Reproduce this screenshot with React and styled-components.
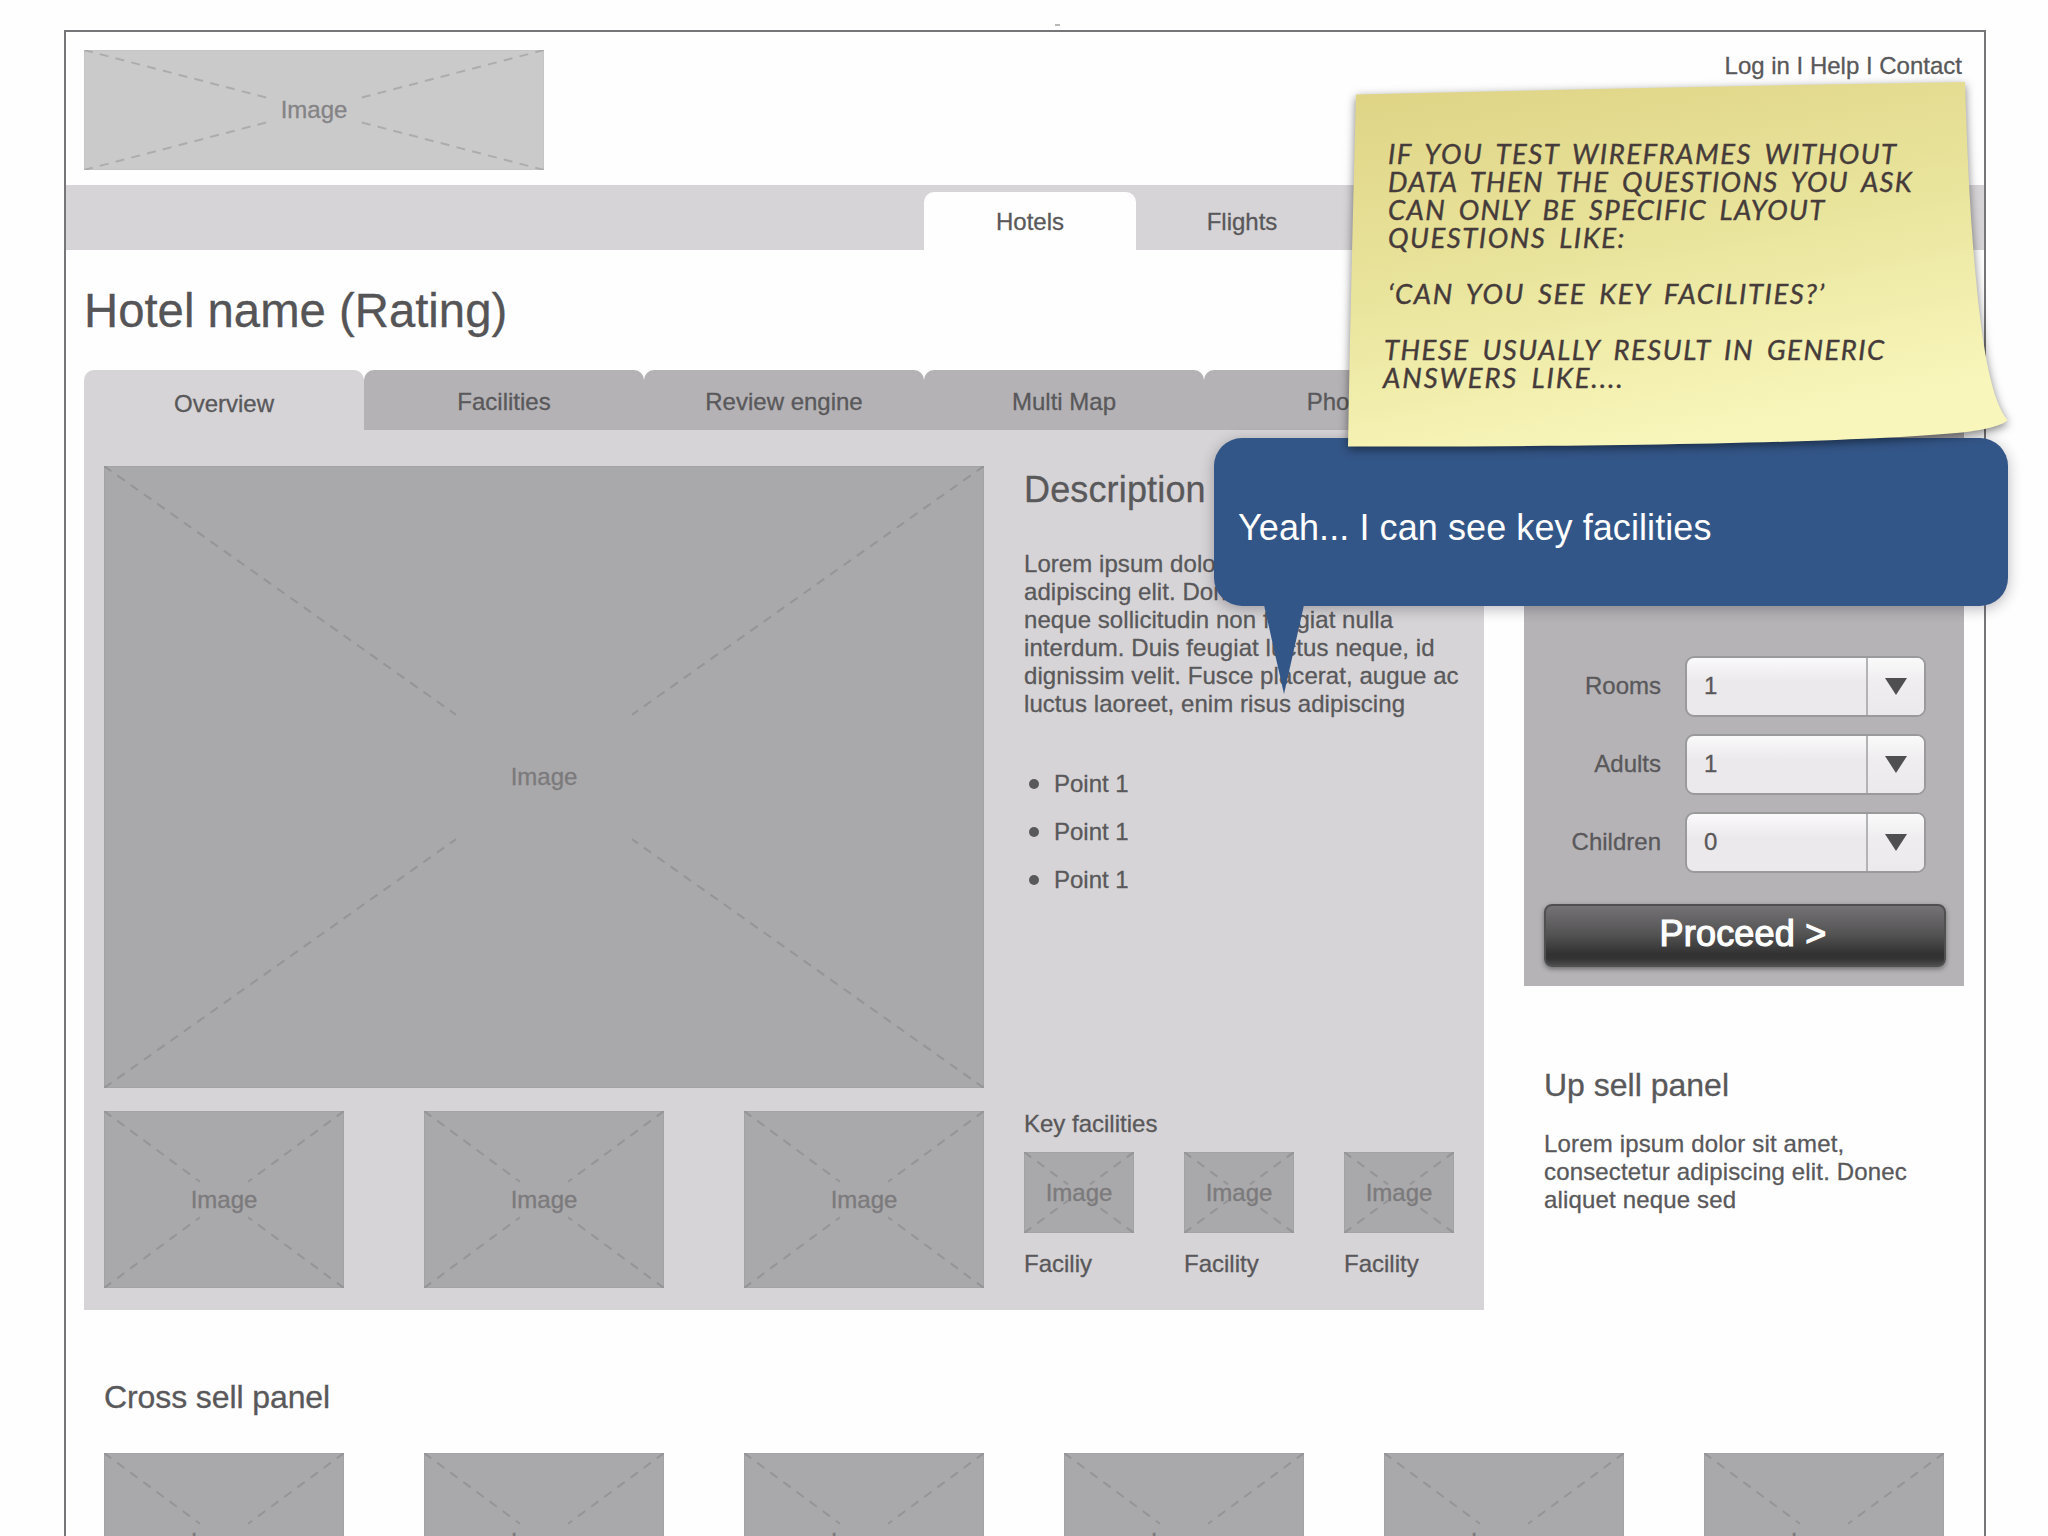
import React from "react";
import styled, { createGlobalStyle } from "styled-components";

const GlobalStyle = createGlobalStyle`
  *, *::before, *::after { box-sizing: border-box; }
  html, body { margin: 0; padding: 0; background: #fefefe; overflow: hidden; }
  h1, h2, h3, p, ul { margin: 0; padding: 0; font-weight: 400; }
  body {
    font-family: "Liberation Sans", Arial, sans-serif;
    font-size: 24px;
    line-height: 28px;
    color: #59585a;
    -webkit-text-stroke: 0.3px currentColor;
  }
`;

const Stage = styled.div`
  position: relative;
  width: 2048px;
  height: 1536px;
  overflow: hidden;
  padding: 30px 62px 0 64px;
`;

const TopMark = styled.div`
  position: absolute;
  left: 1055px;
  top: 24px;
  width: 5px;
  height: 2px;
  background: #b9b8b9;
`;

const Frame = styled.div`
  height: 1600px;
  border: 2px solid #767577;
`;

const Header = styled.header`
  display: flex;
  justify-content: space-between;
  align-items: flex-start;
  height: 153px;
  padding: 18px 22px 0 18px;
`;

const UtilityLinks = styled.nav`
  padding-top: 2px;
  white-space: pre;
`;

const PrimaryNav = styled.nav`
  display: flex;
  align-items: flex-end;
  height: 65px;
  padding-left: 858px;
  background: #d6d4d6;
`;

const PrimaryTab = styled.div`
  width: 212px;
  height: 58px;
  padding-top: 16px;
  text-align: center;
  border-radius: 10px 10px 0 0;
  background: ${(p) => (p.$active ? "#fefefe" : "transparent")};
`;

const PageTitle = styled.h1`
  margin: 33px 0 31px 18px;
  font-size: 47.3px;
  line-height: 56px;
  color: #555456;
`;

const Columns = styled.main`
  display: grid;
  grid-template-columns: 1400px 440px;
  column-gap: 40px;
  margin-left: 18px;
`;

const SectionTabs = styled.div`
  display: flex;
  height: 60px;
`;

const SectionTab = styled.div`
  width: 280px;
  padding-top: ${(p) => (p.$active ? 20 : 18)}px;
  text-align: center;
  border-radius: 10px 10px 0 0;
  background: ${(p) => (p.$active ? "#d6d4d6" : "#b4b2b5")};
`;

const SectionBody = styled.section`
  display: grid;
  grid-template-columns: 880px 430px;
  column-gap: 40px;
  height: 880px;
  padding: 36px 20px 0;
  background: #d6d4d6;
`;

const Gallery = styled.div`
  display: flex;
  flex-direction: column;
  gap: 23px;
`;

const ThumbRow = styled.div`
  display: flex;
  gap: 80px;
`;

const PlaceholderBox = styled.div`
  position: relative;
  display: flex;
  flex: none;
  align-items: center;
  justify-content: center;
  width: ${(p) => p.$w}px;
  height: ${(p) => p.$h}px;
  background: ${(p) => (p.$light ? "#cbcacb" : "#a9a8aa")};
  box-shadow: inset 0 0 0 1px ${(p) => (p.$light ? "#c6c5c6" : "#a3a2a4")};
  color: ${(p) => (p.$light ? "#848385" : "#7b7a7c")};
`;

const Cross = styled.svg`
  position: absolute;
  inset: 0;
  width: 100%;
  height: 100%;
`;

const PlaceholderLabel = styled.span`
  position: relative;
`;

function Placeholder({ w, h, light }) {
  const x1 = w * 0.4;
  const x2 = w * 0.6;
  const y1 = h * 0.4;
  const y2 = h * 0.6;
  return (
    <PlaceholderBox $w={w} $h={h} $light={light}>
      <Cross viewBox={`0 0 ${w} ${h}`}>
        <path
          d={`M0 0L${x1} ${y1}M${w} 0L${x2} ${y1}M0 ${h}L${x1} ${y2}M${w} ${h}L${x2} ${y2}`}
          fill="none"
          stroke={light ? "#adacad" : "#959496"}
          strokeWidth="2"
          strokeDasharray="9 7.3"
        />
      </Cross>
      <PlaceholderLabel>Image</PlaceholderLabel>
    </PlaceholderBox>
  );
}

const Details = styled.div`
  display: flex;
  flex-direction: column;
  padding-top: 3px;
  white-space: nowrap;
`;

const DetailsTitle = styled.h2`
  margin-bottom: 39px;
  font-size: 36px;
  line-height: 42px;
  letter-spacing: 0.15px;
`;

const DetailsText = styled.p`
  letter-spacing: 0.06px;
`;

const Points = styled.ul`
  display: flex;
  flex-direction: column;
  gap: 20px;
  height: 340px;
  margin-top: 52px;
  list-style: none;
`;

const Point = styled.li`
  display: flex;
  align-items: center;
  gap: 15px;
  padding-left: 5px;
  &::before {
    content: "";
    width: 10px;
    height: 10px;
    border-radius: 50%;
    background: #59585a;
  }
`;

const KeyTitle = styled.h3`
  font-size: 24px;
  line-height: 28px;
`;

const Facilities = styled.div`
  display: flex;
  gap: 50px;
  margin-top: 14px;
`;

const Facility = styled.div`
  display: flex;
  flex-direction: column;
  gap: 17px;
`;

const BookingPanel = styled.form`
  display: flex;
  flex-direction: column;
  justify-content: flex-end;
  gap: 17px;
  height: 616px;
  padding: 0 18px 19px 20px;
  background: #b5b3b6;
`;

const Field = styled.label`
  display: flex;
  align-items: center;
  justify-content: flex-end;
  gap: 24px;
  padding-right: 20px;
`;

const FieldName = styled.span`
  padding-bottom: 2px;
`;

const Select = styled.span`
  display: flex;
  width: 241px;
  height: 61px;
  border: 2px solid #9a999b;
  border-radius: 9px;
  background: linear-gradient(#fbfafb, #ebe9eb 42%, #ebe9eb);
`;

const SelectValue = styled.span`
  display: flex;
  align-items: center;
  width: 181px;
  padding-left: 17px;
  padding-bottom: 2px;
  border-right: 2px solid #b3b2b4;
`;

const SelectArrow = styled.span`
  display: flex;
  flex: 1;
  align-items: center;
  justify-content: center;
  border-radius: 0 7px 7px 0;
  background: linear-gradient(#fbfafb, #efedef 42%, #ebe9eb);
`;

function Dropdown({ label, value }) {
  return (
    <Field>
      <FieldName>{label}</FieldName>
      <Select>
        <SelectValue>{value}</SelectValue>
        <SelectArrow>
          <svg width="22" height="17" viewBox="0 0 22 17">
            <path d="M0 0H22L11 17Z" fill="#4f4e50" />
          </svg>
        </SelectArrow>
      </Select>
    </Field>
  );
}

const ProceedButton = styled.button`
  width: 402px;
  height: 63px;
  margin-top: 14px;
  padding: 0 4px 3px 0;
  border: 2px solid #505051;
  border-radius: 8px;
  background: linear-gradient(#747274, #545354 48%, #323132 82%, #353435 90%, #4c4b4c);
  box-shadow: 0 2px 5px rgba(0, 0, 0, 0.4);
  color: #fff;
  font: 400 36px/42px "Liberation Sans", Arial, sans-serif;
  letter-spacing: 0.2px;
  -webkit-text-stroke: 1.2px #fff;
`;

const UpSell = styled.section`
  padding: 80px 0 0 20px;
  white-space: nowrap;
`;

const PanelTitle = styled.h3`
  font-size: 32px;
  line-height: 38px;
  letter-spacing: ${(p) => p.$track || 0}px;
`;

const UpSellText = styled.p`
  margin-top: 26px;
  letter-spacing: 0.16px;
`;

const CrossSell = styled.section`
  padding: 68px 0 0 38px;
`;

const CrossSellRow = styled(ThumbRow)`
  margin-top: 37px;
`;

const Speech = styled.aside`
  position: absolute;
  left: 1214px;
  top: 438px;
  width: 794px;
  height: 168px;
  padding: 70px 0 0 24px;
  border-radius: 28px;
  background: #335688;
  box-shadow: 0 3px 14px rgba(40, 30, 50, 0.32);
  color: #fff;
  font-size: 36px;
  line-height: 40px;
  letter-spacing: 0.08px;
  -webkit-text-stroke: 0;
`;

const SpeechTail = styled.svg`
  position: absolute;
  left: 50px;
  top: 167px;
`;

const Note = styled.aside`
  position: absolute;
  left: 1340px;
  top: 74px;
  width: 680px;
  height: 384px;
  padding: 66px 0 0 48px;
`;

const NotePaper = styled.svg`
  position: absolute;
  inset: 0;
  overflow: visible;
  filter: drop-shadow(0 3px 5px rgba(0, 0, 0, 0.5));
`;

const NoteText = styled.div`
  position: relative;
  display: flex;
  flex-direction: column;
  gap: 28px;
  font-family: Lato, "Open Sans", sans-serif;
  font-size: 27.5px;
  font-style: italic;
  line-height: 28px;
  word-spacing: 5px;
  color: #453b3a;
  white-space: nowrap;
  -webkit-text-stroke: 0.4px #453b3a;
`;

const NoteLine = styled.div`
  letter-spacing: ${(p) => p.$track}px;
  margin-left: ${(p) => p.$shift || 0}px;
`;

const noteParagraphs = [
  [
    { text: "IF YOU TEST WIREFRAMES WITHOUT", track: 1.5 },
    { text: "DATA THEN THE QUESTIONS YOU ASK", track: 1.35 },
    { text: "CAN ONLY BE SPECIFIC LAYOUT", track: 1.3 },
    { text: "QUESTIONS LIKE:", track: 1.53 },
  ],
  [{ text: "‘CAN YOU SEE KEY FACILITIES?’", track: 1.57 }],
  [
    { text: "THESE USUALLY RESULT IN GENERIC", track: 1.5, shift: -4 },
    { text: "ANSWERS LIKE....", track: 1.9, shift: -5 },
  ],
];

const sectionTabs = ["Overview", "Facilities", "Review engine", "Multi Map", "Photos"];

export default function App() {
  return (
    <Stage>
      <GlobalStyle />
      <TopMark />
      <Frame>
        <Header>
          <Placeholder w={460} h={120} light />
          <UtilityLinks>Log in I Help I Contact</UtilityLinks>
        </Header>
        <PrimaryNav>
          <PrimaryTab $active>Hotels</PrimaryTab>
          <PrimaryTab>Flights</PrimaryTab>
        </PrimaryNav>
        <PageTitle>Hotel name (Rating)</PageTitle>
        <Columns>
          <div>
            <SectionTabs>
              {sectionTabs.map((name, i) => (
                <SectionTab key={name} $active={i === 0}>{name}</SectionTab>
              ))}
            </SectionTabs>
            <SectionBody>
              <Gallery>
                <Placeholder w={880} h={622} />
                <ThumbRow>
                  <Placeholder w={240} h={177} />
                  <Placeholder w={240} h={177} />
                  <Placeholder w={240} h={177} />
                </ThumbRow>
              </Gallery>
              <Details>
                <DetailsTitle>Description</DetailsTitle>
                <DetailsText>
                  Lorem ipsum dolor sit amet, consectetur<br />
                  adipiscing elit. Donec aliquet<br />
                  neque sollicitudin non feugiat nulla<br />
                  interdum. Duis feugiat luctus neque, id<br />
                  dignissim velit. Fusce placerat, augue ac<br />
                  luctus laoreet, enim risus adipiscing
                </DetailsText>
                <Points>
                  <Point>Point 1</Point>
                  <Point>Point 1</Point>
                  <Point>Point 1</Point>
                </Points>
                <KeyTitle>Key facilities</KeyTitle>
                <Facilities>
                  {["Faciliy", "Facility", "Facility"].map((name, i) => (
                    <Facility key={i}>
                      <Placeholder w={110} h={81} />
                      {name}
                    </Facility>
                  ))}
                </Facilities>
              </Details>
            </SectionBody>
          </div>
          <div>
            <BookingPanel>
              <Dropdown label="Rooms" value="1" />
              <Dropdown label="Adults" value="1" />
              <Dropdown label="Children" value="0" />
              <ProceedButton type="button">Proceed &gt;</ProceedButton>
            </BookingPanel>
            <UpSell>
              <PanelTitle>Up sell panel</PanelTitle>
              <UpSellText>
                Lorem ipsum dolor sit amet,<br />
                consectetur adipiscing elit. Donec<br />
                aliquet neque sed
              </UpSellText>
            </UpSell>
          </div>
        </Columns>
        <CrossSell>
          <PanelTitle $track={-0.1}>Cross sell panel</PanelTitle>
          <CrossSellRow>
            {[0, 1, 2, 3, 4, 5].map((n) => (
              <Placeholder key={n} w={240} h={177} />
            ))}
          </CrossSellRow>
        </CrossSell>
      </Frame>

      <Speech>
        Yeah... I can see key facilities
        <SpeechTail width="40" height="89" viewBox="0 0 40 89">
          <path d="M0 0H40L20 89Z" fill="#335688" />
        </SpeechTail>
      </Speech>

      <Note>
        <NotePaper width="680" height="384" viewBox="1340 74 680 384">
          <defs>
            <linearGradient id="paper" x1="0.1" y1="0" x2="0.45" y2="1">
              <stop offset="0" stopColor="#dfd486" />
              <stop offset="0.5" stopColor="#e9e49c" />
              <stop offset="1" stopColor="#f8f6bb" />
            </linearGradient>
          </defs>
          <path
            d="M1356 94.5Q1660 87 1965 82C1967 150 1970 220 1977 290C1983 350 1992 402 2007.5 420C2004 425 1985 430 1962 432.5C1850 443 1600 447 1348 446.5C1350 330 1353 210 1356 94.5Z"
            fill="url(#paper)"
          />
        </NotePaper>
        <NoteText>
          {noteParagraphs.map((lines, i) => (
            <div key={i}>
              {lines.map((line) => (
                <NoteLine key={line.text} $track={line.track} $shift={line.shift}>
                  {line.text}
                </NoteLine>
              ))}
            </div>
          ))}
        </NoteText>
      </Note>
    </Stage>
  );
}
